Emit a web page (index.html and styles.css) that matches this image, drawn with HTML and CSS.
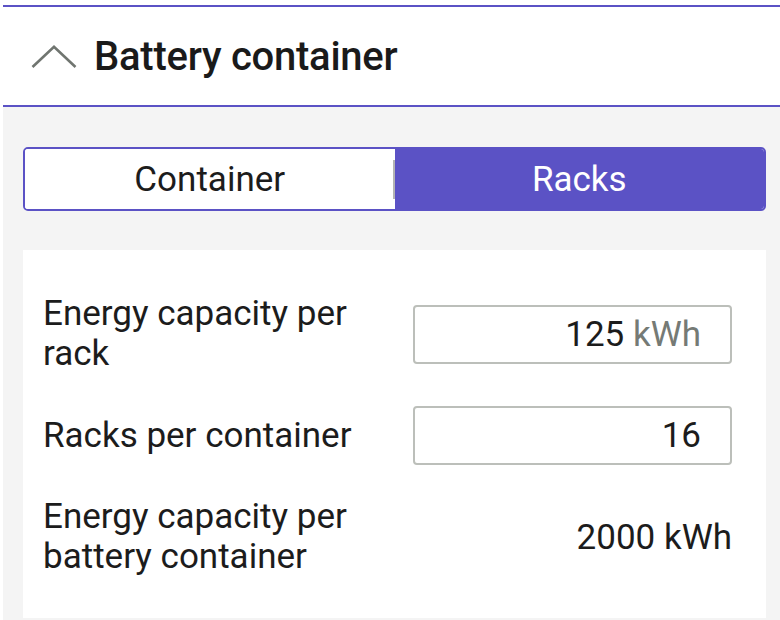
FILE: index.html
```html
<!DOCTYPE html>
<html lang="en">
<head>
<meta charset="utf-8">
<title>Battery container</title>
<link rel="stylesheet" href="styles.css">
</head>
<body>
<section class="panel">
  <header class="panel-header">
    <svg class="chevron" width="46" height="24" viewBox="0 0 46 24" aria-hidden="true">
      <polyline points="1.5,22 23,1.8 44.5,22" fill="none" stroke="#707570" stroke-width="2.6"/>
    </svg>
    <h1 class="panel-title">Battery container</h1>
  </header>
  <div class="panel-body">
    <div class="toggle">
      <button class="toggle-btn">Container</button>
      <button class="toggle-btn active">Racks</button>
    </div>
    <div class="card">
      <div class="row">
        <div class="label">Energy capacity per rack</div>
        <div class="field"><span class="field-text">125 <span class="unit">kWh</span></span></div>
      </div>
      <div class="row">
        <div class="label">Racks per container</div>
        <div class="field"><span class="field-text">16</span></div>
      </div>
      <div class="row">
        <div class="label">Energy capacity per battery container</div>
        <div class="value">2000 kWh</div>
      </div>
    </div>
  </div>
</section>
</body>
</html>
```

FILE: styles.css
```css
html, body {
  margin: 0;
  padding: 0;
  background: #ffffff;
  font-family: Roboto, "Liberation Sans", Arial, sans-serif;
  color: #1c1c1c;
}

.panel {
  margin: 5px 0 0 3px;
  border-top: 2px solid #5b52c5;
  background: #f4f4f4;
  height: 613px;
}

.panel-header {
  height: 100px;
  box-sizing: border-box;
  background: #ffffff;
  border-bottom: 2px solid #5b52c5;
  display: flex;
  align-items: center;
  padding-left: 28px;
  gap: 17px;
}

.chevron {
  display: block;
  margin-top: 1px;
}

.panel-title {
  margin: 0;
  font-size: 40px;
  font-weight: 500;
  color: #1a1a1a;
  letter-spacing: -0.25px;
}

.panel-body {
  padding: 40px 14px 0 20px;
}

.toggle {
  display: grid;
  grid-template-columns: 1fr 1fr;
  height: 64px;
  box-sizing: border-box;
  border: 2px solid #5b52c5;
  border-radius: 5px;
  overflow: hidden;
  background: #ffffff;
}

.toggle-btn {
  position: relative;
  border: 0;
  margin: 0;
  padding: 0;
  background: #ffffff;
  font-family: inherit;
  font-size: 35px;
  color: #1c1c1c;
}

.toggle-btn:first-child::after {
  content: "";
  position: absolute;
  right: 0;
  top: 11px;
  bottom: 10px;
  width: 2px;
  background: #b4b4b4;
}

.toggle-btn.active {
  background: #5b52c5;
  color: #ffffff;
}

.card {
  margin-top: 39px;
  background: #ffffff;
  padding: 44px 34px 41px 20px;
  display: flex;
  flex-direction: column;
  gap: 32px;
}

.row {
  display: flex;
  align-items: center;
  justify-content: space-between;
}

.label {
  font-size: 35px;
  line-height: 40px;
  max-width: 340px;
}

.field {
  width: 319px;
  height: 59px;
  box-sizing: border-box;
  border: 2px solid #bcbfba;
  border-radius: 4px;
  display: flex;
  align-items: center;
  justify-content: flex-end;
  padding-right: 29px;
  font-size: 35px;
}

.unit {
  color: #757a75;
}

.value {
  font-size: 35px;
}
```
